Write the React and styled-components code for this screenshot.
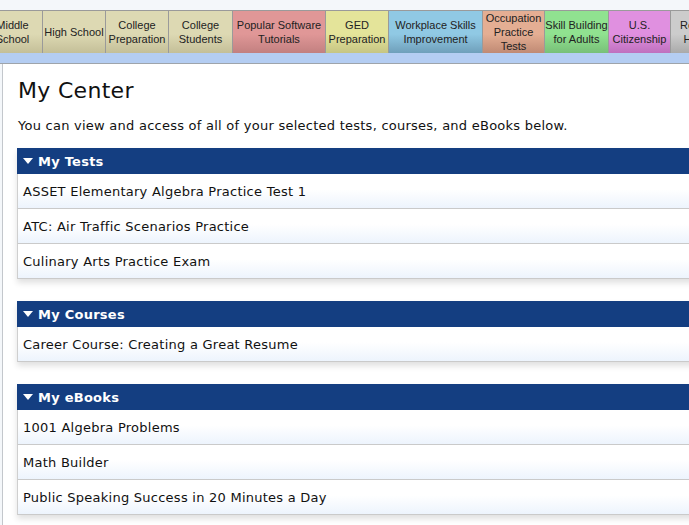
import React from 'react'
import styled, { createGlobalStyle } from 'styled-components'

const GlobalStyle = createGlobalStyle`
  html, body {
    margin: 0;
    padding: 0;
    background: #f4f7fa;
    overflow: hidden;
  }
`

const Page = styled.div`
  width: 689px;
  height: 525px;
  overflow: hidden;
  padding-top: 10px;
  box-sizing: border-box;
`

const TabBar = styled.div`
  display: flex;
  margin-left: -17px;
  height: 43px;
  border-top: 1px solid #9a9a9a;
  box-sizing: border-box;
`

const Tab = styled.div`
  flex: 0 0 ${p => p.w}px;
  display: flex;
  align-items: center;
  justify-content: center;
  text-align: center;
  box-sizing: border-box;
  border-right: 1px solid #9a9a9a;
  font-family: "Liberation Sans", Arial, sans-serif;
  font-size: 11px;
  line-height: 14px;
  color: #222;
  background: linear-gradient(to bottom, ${p => p.c} 0%, ${p => p.c} 55%, ${p => p.d} 100%);
`

const Strip = styled.div`
  height: 10px;
  background: #b4cdf2;
  border-bottom: 1px solid #9ea4ab;
`

const Panel = styled.div`
  margin-left: 2px;
  border-left: 1px solid #c3c7cc;
  background: #fff;
  height: 100%;
  padding: 12px 0 0 14px;
  font-family: Verdana, "DejaVu Sans", sans-serif;
  letter-spacing: 0.25px;
  color: #111;
`

const Title = styled.h1`
  margin: 0;
  padding-left: 1px;
  font-weight: normal;
  font-size: 22px;
  letter-spacing: 0.3px;
  line-height: 30px;
`

const Intro = styled.p`
  margin: 11px 0 14px 1px;
  font-size: 13px;
  line-height: 17px;
`

const Section = styled.div`
  width: 720px;
  margin-bottom: 22px;
  box-shadow: 0 4px 6px rgba(0, 0, 0, 0.12);
`

const Header = styled.div`
  height: 26px;
  background: #143e81;
  color: #fff;
  font-weight: bold;
  font-size: 13px;
  display: flex;
  align-items: center;
  padding-left: 6px;
  gap: 5px;
`

const Arrow = styled.span`
  width: 0;
  height: 0;
  border-left: 5px solid transparent;
  border-right: 5px solid transparent;
  border-top: 6px solid #fff;
`

const Row = styled.div`
  height: 35px;
  box-sizing: border-box;
  border-left: 1px solid #cfcfcf;
  border-bottom: 1px solid #cacaca;
  background: linear-gradient(to bottom, #fff 0%, #fff 45%, #edf4fd 100%);
  display: flex;
  align-items: center;
  padding-left: 5px;
  font-size: 13px;
`

const tabs = [
  { t: ['Middle', 'School'], w: 60, c: '#ddd9b3', d: '#c4bf98' },
  { t: ['High School'], w: 63, c: '#ddd9b3', d: '#c4bf98' },
  { t: ['College', 'Preparation'], w: 63, c: '#ddd9b3', d: '#c4bf98' },
  { t: ['College', 'Students'], w: 64, c: '#ddd9b3', d: '#c4bf98' },
  { t: ['Popular Software', 'Tutorials'], w: 93, c: '#e09797', d: '#c28080' },
  { t: ['GED', 'Preparation'], w: 63, c: '#e4e49a', d: '#c6c583' },
  { t: ['Workplace Skills', 'Improvement'], w: 94, c: '#90c9e4', d: '#6f9fba' },
  { t: ['Occupation', 'Practice', 'Tests'], w: 62, c: '#e4ae93', d: '#c08a74' },
  { t: ['Skill Building', 'for Adults'], w: 64, c: '#90e290', d: '#78c078' },
  { t: ['U.S.', 'Citizenship'], w: 62, c: '#e090e0', d: '#bf70be' },
  { t: ['Reading', 'History'], w: 60, c: '#cccccc', d: '#aaaaaa' },
]

const sections = [
  { title: 'My Tests', items: ['ASSET Elementary Algebra Practice Test 1', 'ATC: Air Traffic Scenarios Practice', 'Culinary Arts Practice Exam'] },
  { title: 'My Courses', items: ['Career Course: Creating a Great Resume'] },
  { title: 'My eBooks', items: ['1001 Algebra Problems', 'Math Builder', 'Public Speaking Success in 20 Minutes a Day'] },
]

export default function App() {
  return (
    <Page>
      <GlobalStyle />
      <TabBar>
        {tabs.map((tab, i) => (
          <Tab key={i} w={tab.w} c={tab.c} d={tab.d}>
            <div>
              {tab.t.map((line, j) => <div key={j}>{line}</div>)}
            </div>
          </Tab>
        ))}
      </TabBar>
      <Strip />
      <Panel>
        <Title>My Center</Title>
        <Intro>You can view and access of all of your selected tests, courses, and eBooks below.</Intro>
        {sections.map(s => (
          <Section key={s.title}>
            <Header><Arrow />{s.title}</Header>
            {s.items.map(item => <Row key={item}>{item}</Row>)}
          </Section>
        ))}
      </Panel>
    </Page>
  )
}
